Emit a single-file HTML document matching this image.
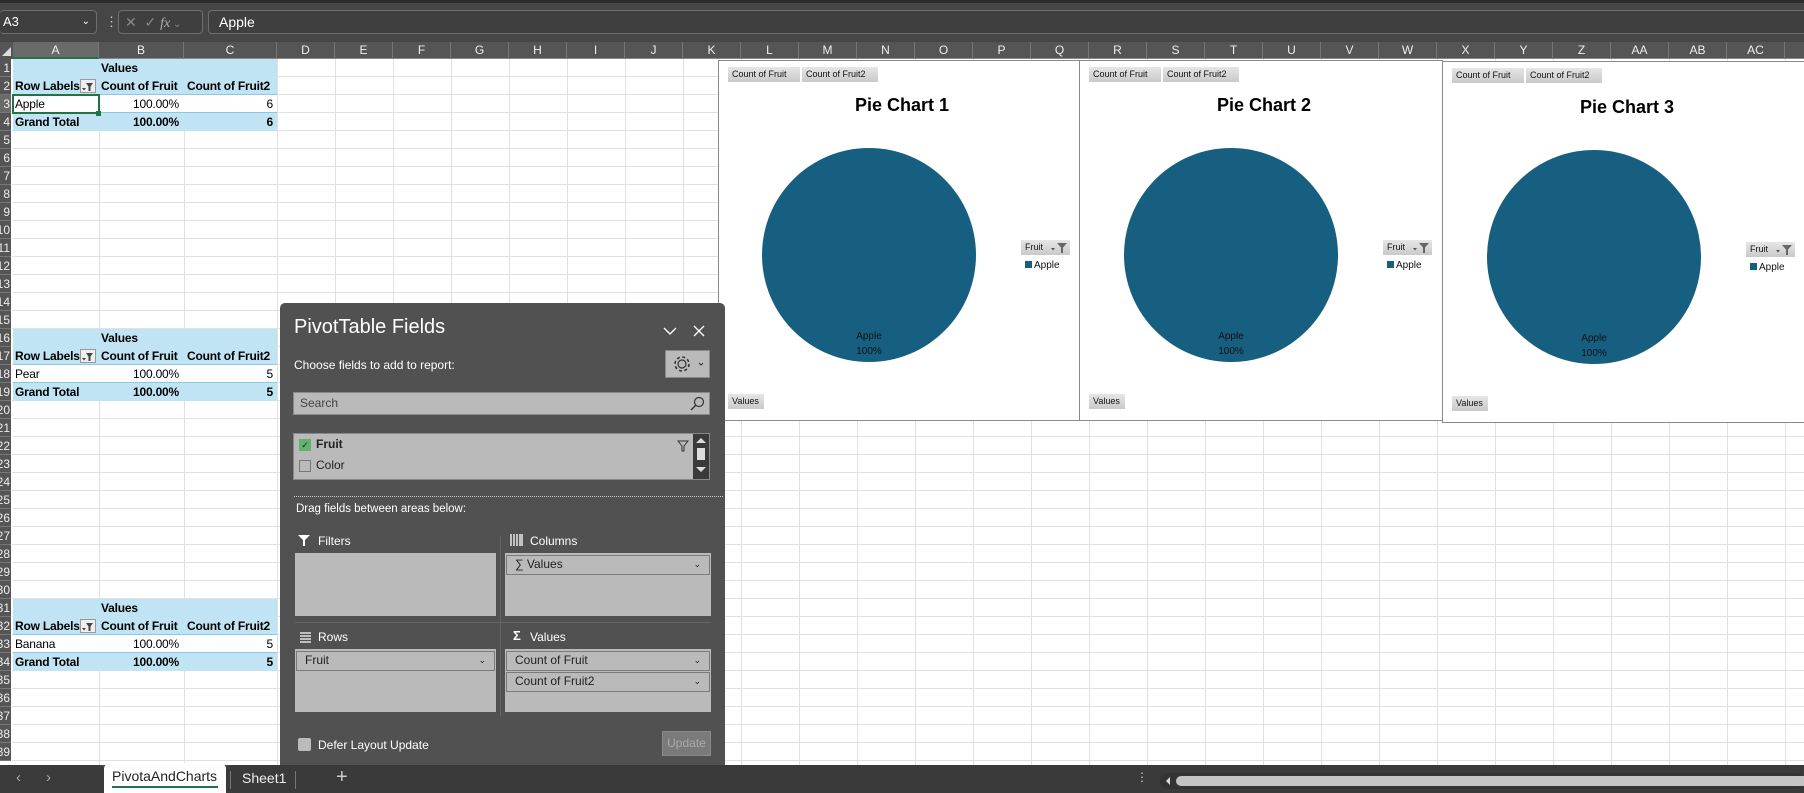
<!DOCTYPE html>
<html><head><meta charset="utf-8"><style>
*{box-sizing:border-box;margin:0;padding:0}
body{width:1804px;height:793px;overflow:hidden;background:#fff;font-family:"Liberation Sans",sans-serif;position:relative}
.a{position:absolute}
.top{left:0;top:0;width:1804px;height:42px;background:#464646;border-top:3px solid #2c2c2c}
.box{border:1px solid #6e6e6e;border-radius:4px;background:#3f3f3f;color:#fff}
.ch{top:42px;height:17px;background:#555;color:#eee;font-size:12px;text-align:center;line-height:17px;border-right:1px solid #777;border-bottom:1px solid #888}
.rh{left:0;width:11px;height:18px;background:#555;color:#eee;font-size:12px;line-height:18px;overflow:hidden;border-bottom:1px solid #777}
.rh span{position:absolute;right:1px;top:0}
.gridL{left:12px;top:59px;width:265px;height:706px;background-image:repeating-linear-gradient(to bottom,transparent 0 17px,#e1e1e1 17px 18px)}
.gridR{left:277px;top:59px;width:1527px;height:706px;
background-image:repeating-linear-gradient(to bottom,transparent 0 17px,#e1e1e1 17px 18px),repeating-linear-gradient(to right,#e1e1e1 0 1px,transparent 1px 58px)}
.vl{top:59px;width:1px;height:706px;background:#e1e1e1}
.pv{font-size:12px;color:#000;line-height:18px}
.pb{background:#c0e4f4}
.c{position:absolute;white-space:nowrap;letter-spacing:-0.2px}
b{font-weight:bold}
.chart{background:#fff;border:1.5px solid #8a8a8a}
.btn{position:absolute;background:linear-gradient(#e6e6e6,#c9c9c9);font-size:9px;color:#111;line-height:15px;padding-left:4px;white-space:nowrap}
.pie{position:absolute;border-radius:50%;background:#175f80}
.pane{left:280px;top:303px;width:445px;height:462px;background:#515151;border-radius:5px 5px 0 0;color:#fff;font-size:12px}
.gb{position:absolute;background:#bababa}
.it{position:absolute;background:#bababa;border:1px solid #7a7a7a;color:#222;font-size:12px;line-height:17px;padding-left:8px}
.it i{position:absolute;right:8px;top:0;font-style:normal;font-size:9px}
.fb{position:absolute;width:16px;height:14px;border:1px solid #999;background:#eee}
</style></head><body>
<div class="a top"></div>
<div class="a box" style="left:0;top:10px;width:97px;height:24px;border-left:none;font-size:13px;line-height:22px;padding-left:3px">A3<span style="position:absolute;right:6px;top:0;font-size:10px">&#8964;</span></div>
<div class="a" style="left:105px;top:14px;color:#ccc;font-size:13px">&#8942;</div>
<div class="a box" style="left:118px;top:10px;width:85px;height:24px;color:#888;font-size:14px;line-height:22px;padding-left:6px">✕ &nbsp;✓ <i style="font-family:'Liberation Serif',serif;color:#aaa">fx</i><span style="font-size:10px"> &#8964;</span></div>
<div class="a box" style="left:208px;top:10px;width:1600px;height:24px;font-size:14px;line-height:22px;padding-left:10px">Apple</div>

<div class="a gridL"></div>
<div class="a gridR"></div>
<div class="a vl" style="left:99px"></div>
<div class="a vl" style="left:184px"></div>

<div class="a" style="left:0;top:42px;width:13px;height:17px;background:#555"></div>
<div class="a" style="left:2px;top:47px;width:0;height:0;border-left:9px solid transparent;border-bottom:9px solid #ddd"></div>
<div class="a ch" style="left:13px;width:86px;background:#6a6a6a;border-bottom:2px solid #217346">A</div>
<div class="a ch" style="left:99px;width:85px">B</div>
<div class="a ch" style="left:184px;width:93px">C</div>
<div class="a ch" style="left:277px;width:58px">D</div><div class="a ch" style="left:335px;width:58px">E</div><div class="a ch" style="left:393px;width:58px">F</div><div class="a ch" style="left:451px;width:58px">G</div><div class="a ch" style="left:509px;width:58px">H</div><div class="a ch" style="left:567px;width:58px">I</div><div class="a ch" style="left:625px;width:58px">J</div><div class="a ch" style="left:683px;width:58px">K</div><div class="a ch" style="left:741px;width:58px">L</div><div class="a ch" style="left:799px;width:58px">M</div><div class="a ch" style="left:857px;width:58px">N</div><div class="a ch" style="left:915px;width:58px">O</div><div class="a ch" style="left:973px;width:58px">P</div><div class="a ch" style="left:1031px;width:58px">Q</div><div class="a ch" style="left:1089px;width:58px">R</div><div class="a ch" style="left:1147px;width:58px">S</div><div class="a ch" style="left:1205px;width:58px">T</div><div class="a ch" style="left:1263px;width:58px">U</div><div class="a ch" style="left:1321px;width:58px">V</div><div class="a ch" style="left:1379px;width:58px">W</div><div class="a ch" style="left:1437px;width:58px">X</div><div class="a ch" style="left:1495px;width:58px">Y</div><div class="a ch" style="left:1553px;width:58px">Z</div><div class="a ch" style="left:1611px;width:58px">AA</div><div class="a ch" style="left:1669px;width:58px">AB</div><div class="a ch" style="left:1727px;width:58px">AC</div><div class="a ch" style="left:1785px;width:58px"></div>

<div class="a rh" style="top:59px"><span>1</span></div><div class="a rh" style="top:77px"><span>2</span></div><div class="a rh" style="top:95px;background:#6a6a6a"><span>3</span></div><div class="a rh" style="top:113px"><span>4</span></div><div class="a rh" style="top:131px"><span>5</span></div><div class="a rh" style="top:149px"><span>6</span></div><div class="a rh" style="top:167px"><span>7</span></div><div class="a rh" style="top:185px"><span>8</span></div><div class="a rh" style="top:203px"><span>9</span></div><div class="a rh" style="top:221px"><span>10</span></div><div class="a rh" style="top:239px"><span>11</span></div><div class="a rh" style="top:257px"><span>12</span></div><div class="a rh" style="top:275px"><span>13</span></div><div class="a rh" style="top:293px"><span>14</span></div><div class="a rh" style="top:311px"><span>15</span></div><div class="a rh" style="top:329px"><span>16</span></div><div class="a rh" style="top:347px"><span>17</span></div><div class="a rh" style="top:365px"><span>18</span></div><div class="a rh" style="top:383px"><span>19</span></div><div class="a rh" style="top:401px"><span>20</span></div><div class="a rh" style="top:419px"><span>21</span></div><div class="a rh" style="top:437px"><span>22</span></div><div class="a rh" style="top:455px"><span>23</span></div><div class="a rh" style="top:473px"><span>24</span></div><div class="a rh" style="top:491px"><span>25</span></div><div class="a rh" style="top:509px"><span>26</span></div><div class="a rh" style="top:527px"><span>27</span></div><div class="a rh" style="top:545px"><span>28</span></div><div class="a rh" style="top:563px"><span>29</span></div><div class="a rh" style="top:581px"><span>30</span></div><div class="a rh" style="top:599px"><span>31</span></div><div class="a rh" style="top:617px"><span>32</span></div><div class="a rh" style="top:635px"><span>33</span></div><div class="a rh" style="top:653px"><span>34</span></div><div class="a rh" style="top:671px"><span>35</span></div><div class="a rh" style="top:689px"><span>36</span></div><div class="a rh" style="top:707px"><span>37</span></div><div class="a rh" style="top:725px"><span>38</span></div><div class="a rh" style="top:743px"><span>39</span></div>

<!-- pivot table 1 -->
<div class="a pv" style="left:13px;top:59px;width:264px;height:72px">
 <div class="c pb" style="left:0;top:0;width:264px;height:36px;border-bottom:1px solid #8cc7e6"></div>
 <div class="c" style="left:0;top:36px;width:264px;height:18px;background:#fff;border-bottom:1px solid #8cc7e6"></div>
 <div class="c pb" style="left:0;top:54px;width:264px;height:18px"></div>
 <div class="c" style="left:88px;top:0"><b>Values</b></div>
 <div class="c" style="left:2px;top:18px"><b>Row Labels</b></div>
 <div class="fb" style="left:67px;top:20px"><svg width="14" height="12"><path d="M5 2h7L9.5 5.5V10h-2V5.5z" fill="#444"/><path d="M1 7h4l-2 2.5z" fill="#444"/></svg></div>
 <div class="c" style="left:88px;top:18px"><b>Count of Fruit</b></div>
 <div class="c" style="left:174px;top:18px"><b>Count of Fruit2</b></div>
 <div class="c" style="left:2px;top:36px">Apple</div>
 <div class="c" style="left:86px;top:36px;width:80px;text-align:right">100.00%</div>
 <div class="c" style="left:174px;top:36px;width:86px;text-align:right">6</div>
 <div class="c" style="left:2px;top:54px"><b>Grand Total</b></div>
 <div class="c" style="left:86px;top:54px;width:80px;text-align:right"><b>100.00%</b></div>
 <div class="c" style="left:174px;top:54px;width:86px;text-align:right"><b>6</b></div>
 <div class="c" style="left:-1px;top:35px;width:88px;height:20px;border:2px solid #217346"></div>
 <div class="c" style="left:83px;top:52px;width:5px;height:5px;background:#217346"></div>
</div>
<!-- pivot table 2 -->
<div class="a pv" style="left:13px;top:329px;width:264px;height:72px">
 <div class="c pb" style="left:0;top:0;width:264px;height:36px;border-bottom:1px solid #8cc7e6"></div>
 <div class="c" style="left:0;top:36px;width:264px;height:18px;background:#fff;border-bottom:1px solid #8cc7e6"></div>
 <div class="c pb" style="left:0;top:54px;width:264px;height:18px"></div>
 <div class="c" style="left:88px;top:0"><b>Values</b></div>
 <div class="c" style="left:2px;top:18px"><b>Row Labels</b></div>
 <div class="fb" style="left:67px;top:20px"><svg width="14" height="12"><path d="M5 2h7L9.5 5.5V10h-2V5.5z" fill="#444"/><path d="M1 7h4l-2 2.5z" fill="#444"/></svg></div>
 <div class="c" style="left:88px;top:18px"><b>Count of Fruit</b></div>
 <div class="c" style="left:174px;top:18px"><b>Count of Fruit2</b></div>
 <div class="c" style="left:2px;top:36px">Pear</div>
 <div class="c" style="left:86px;top:36px;width:80px;text-align:right">100.00%</div>
 <div class="c" style="left:174px;top:36px;width:86px;text-align:right">5</div>
 <div class="c" style="left:2px;top:54px"><b>Grand Total</b></div>
 <div class="c" style="left:86px;top:54px;width:80px;text-align:right"><b>100.00%</b></div>
 <div class="c" style="left:174px;top:54px;width:86px;text-align:right"><b>5</b></div>
</div>
<!-- pivot table 3 -->
<div class="a pv" style="left:13px;top:599px;width:264px;height:72px">
 <div class="c pb" style="left:0;top:0;width:264px;height:36px;border-bottom:1px solid #8cc7e6"></div>
 <div class="c" style="left:0;top:36px;width:264px;height:18px;background:#fff;border-bottom:1px solid #8cc7e6"></div>
 <div class="c pb" style="left:0;top:54px;width:264px;height:18px"></div>
 <div class="c" style="left:88px;top:0"><b>Values</b></div>
 <div class="c" style="left:2px;top:18px"><b>Row Labels</b></div>
 <div class="fb" style="left:67px;top:20px"><svg width="14" height="12"><path d="M5 2h7L9.5 5.5V10h-2V5.5z" fill="#444"/><path d="M1 7h4l-2 2.5z" fill="#444"/></svg></div>
 <div class="c" style="left:88px;top:18px"><b>Count of Fruit</b></div>
 <div class="c" style="left:174px;top:18px"><b>Count of Fruit2</b></div>
 <div class="c" style="left:2px;top:36px">Banana</div>
 <div class="c" style="left:86px;top:36px;width:80px;text-align:right">100.00%</div>
 <div class="c" style="left:174px;top:36px;width:86px;text-align:right">5</div>
 <div class="c" style="left:2px;top:54px"><b>Grand Total</b></div>
 <div class="c" style="left:86px;top:54px;width:80px;text-align:right"><b>100.00%</b></div>
 <div class="c" style="left:174px;top:54px;width:86px;text-align:right"><b>5</b></div>
</div>

<!-- charts -->
<div class="a chart" style="left:718px;top:60px;width:362px;height:361px">
 <div class="btn" style="left:9px;top:6px;width:72px">Count of Fruit</div>
 <div class="btn" style="left:83px;top:6px;width:76px">Count of Fruit2</div>
 <div class="a" style="left:0;top:34px;width:362px;text-align:center;font-size:18px;font-weight:bold;color:#000;padding-left:4px">Pie Chart 1</div>
 <div class="pie" style="left:43px;top:87px;width:214px;height:214px"></div>
 <div class="a" style="left:100px;top:268px;width:100px;text-align:center;font-size:10px;line-height:15px;color:#111">Apple<br>100%</div>
 <div class="btn" style="left:302px;top:179px;width:49px">Fruit<svg style="position:absolute;right:2px;top:2px" width="18" height="11"><path d="M1 6h4l-2 2.5z" fill="#555"/><path d="M7 1h10l-4 4.5V11h-2V5.5z" fill="#666"/></svg></div>
 <div class="a" style="left:306px;top:199px;font-size:10px;color:#111"><span style="display:inline-block;width:7px;height:7px;background:#175f80;margin-right:2px"></span>Apple</div>
 <div class="btn" style="left:9px;top:333px;width:36px">Values</div>
</div>
<div class="a chart" style="left:1079px;top:60px;width:364px;height:361px">
 <div class="btn" style="left:9px;top:6px;width:72px">Count of Fruit</div>
 <div class="btn" style="left:83px;top:6px;width:76px">Count of Fruit2</div>
 <div class="a" style="left:0;top:34px;width:364px;text-align:center;font-size:18px;font-weight:bold;color:#000;padding-left:4px">Pie Chart 2</div>
 <div class="pie" style="left:44px;top:87px;width:214px;height:214px"></div>
 <div class="a" style="left:101px;top:268px;width:100px;text-align:center;font-size:10px;line-height:15px;color:#111">Apple<br>100%</div>
 <div class="btn" style="left:303px;top:179px;width:49px">Fruit<svg style="position:absolute;right:2px;top:2px" width="18" height="11"><path d="M1 6h4l-2 2.5z" fill="#555"/><path d="M7 1h10l-4 4.5V11h-2V5.5z" fill="#666"/></svg></div>
 <div class="a" style="left:307px;top:199px;font-size:10px;color:#111"><span style="display:inline-block;width:7px;height:7px;background:#175f80;margin-right:2px"></span>Apple</div>
 <div class="btn" style="left:9px;top:333px;width:36px">Values</div>
</div>
<div class="a chart" style="left:1442px;top:61px;width:364px;height:362px">
 <div class="btn" style="left:9px;top:6px;width:72px">Count of Fruit</div>
 <div class="btn" style="left:83px;top:6px;width:76px">Count of Fruit2</div>
 <div class="a" style="left:0;top:35px;width:364px;text-align:center;font-size:18px;font-weight:bold;color:#000;padding-left:4px">Pie Chart 3</div>
 <div class="pie" style="left:44px;top:88px;width:214px;height:214px"></div>
 <div class="a" style="left:101px;top:269px;width:100px;text-align:center;font-size:10px;line-height:15px;color:#111">Apple<br>100%</div>
 <div class="btn" style="left:303px;top:180px;width:49px">Fruit<svg style="position:absolute;right:2px;top:2px" width="18" height="11"><path d="M1 6h4l-2 2.5z" fill="#555"/><path d="M7 1h10l-4 4.5V11h-2V5.5z" fill="#666"/></svg></div>
 <div class="a" style="left:307px;top:200px;font-size:10px;color:#111"><span style="display:inline-block;width:7px;height:7px;background:#175f80;margin-right:2px"></span>Apple</div>
 <div class="btn" style="left:9px;top:334px;width:36px">Values</div>
</div>

<!-- pivot pane -->
<div class="a pane">
 <div class="a" style="left:14px;top:13px;font-size:20px;color:#fff">PivotTable Fields</div>
 <svg class="a" style="left:382px;top:21px" width="50" height="16"><path d="M2 4l6 6 6-6M32 2l10 10M42 2L32 12" stroke="#fff" stroke-width="1.4" fill="none"/></svg>
 <div class="a" style="left:14px;top:55px">Choose fields to add to report:</div>
 <div class="gb" style="left:385px;top:47px;width:45px;height:28px;border:1px solid #888"><svg width="45" height="28"><circle cx="16" cy="13" r="4" fill="none" stroke="#333" stroke-width="1.2"/><circle cx="16" cy="13" r="7" fill="none" stroke="#333" stroke-width="1.6" stroke-dasharray="3 2.5"/><path d="M33 12l2 2 2-2" stroke="#333" fill="none"/></svg></div>
 <div class="gb" style="left:13px;top:89px;width:417px;height:23px;border:1px solid #888;color:#444;line-height:21px;padding-left:6px">Search<svg style="position:absolute;right:4px;top:3px" width="16" height="16"><circle cx="10" cy="6" r="4.5" fill="none" stroke="#333" stroke-width="1.2"/><path d="M7 9l-5 5" stroke="#333" stroke-width="1.4"/></svg></div>
 <div class="gb" style="left:13px;top:130px;width:417px;height:47px;border:1px solid #888;color:#222">
  <div class="a" style="left:5px;top:5px;width:12px;height:12px;background:#5fb36f;font-size:9px;line-height:12px;text-align:center;color:#222">✓</div>
  <div class="a" style="left:22px;top:3px;font-weight:bold">Fruit</div>
  <div class="a" style="left:5px;top:26px;width:12px;height:12px;border:1px solid #777"></div>
  <div class="a" style="left:22px;top:24px">Color</div>
  <svg class="a" style="left:383px;top:6px" width="12" height="12"><path d="M1 1h10L7 6v5H5V6z" fill="none" stroke="#333"/></svg>
  <div class="a" style="left:399px;top:0;width:16px;height:45px;background:#3a3a3a"><div style="position:absolute;left:3px;top:4px;border:5px solid transparent;border-bottom-color:#ddd;border-top:none"></div><div style="position:absolute;left:4px;top:14px;width:8px;height:12px;background:#ddd"></div><div style="position:absolute;left:3px;top:33px;border:5px solid transparent;border-top-color:#ddd;border-bottom:none"></div></div>
 </div>
 <div class="a" style="left:14px;top:193px;width:429px;border-top:1px dotted #ccc"></div>
 <div class="a" style="left:16px;top:200px;font-size:11.5px">Drag fields between areas below:</div>
 <svg class="a" style="left:18px;top:231px" width="12" height="12"><path d="M0 1h12L7 6v6H5V6z" fill="#fff"/></svg>
 <div class="a" style="left:38px;top:231px">Filters</div>
 <svg class="a" style="left:230px;top:231px" width="14" height="12"><path d="M1 0v12M4 0v12M7 0v12M10 0v12M12 0v12" stroke="#fff" stroke-width="1.3"/></svg>
 <div class="a" style="left:250px;top:231px">Columns</div>
 <div class="gb" style="left:15px;top:250px;width:201px;height:63px"></div>
 <div class="gb" style="left:225px;top:250px;width:206px;height:63px"></div>
 <div class="it" style="left:226px;top:252px;width:204px;height:20px">∑ Values<i>&#8964;</i></div>
 <div class="a" style="left:15px;top:319px;width:416px;border-top:1px solid #666"></div>
 <div class="a" style="left:220px;top:233px;height:180px;border-left:1px solid #666"></div>
 <svg class="a" style="left:20px;top:328px" width="12" height="12"><path d="M0 2h11M0 5h11M0 8h11M0 11h11" stroke="#fff" stroke-width="1.3"/></svg>
 <div class="a" style="left:38px;top:327px">Rows</div>
 <div class="a" style="left:233px;top:325px;font-size:13px;font-weight:bold">Σ</div>
 <div class="a" style="left:250px;top:327px">Values</div>
 <div class="gb" style="left:15px;top:346px;width:201px;height:63px"></div>
 <div class="gb" style="left:225px;top:346px;width:206px;height:63px"></div>
 <div class="it" style="left:16px;top:348px;width:199px;height:20px">Fruit<i>&#8964;</i></div>
 <div class="it" style="left:226px;top:348px;width:204px;height:20px">Count of Fruit<i>&#8964;</i></div>
 <div class="it" style="left:226px;top:369px;width:204px;height:20px">Count of Fruit2<i>&#8964;</i></div>
 <div class="a" style="left:18px;top:435px;width:13px;height:13px;background:#bbb;border-radius:2px"></div>
 <div class="a" style="left:38px;top:435px">Defer Layout Update</div>
 <div class="a" style="left:382px;top:428px;width:49px;height:25px;background:#7a7a7a;border:1px solid #8a8a8a;color:#aaa;text-align:center;line-height:23px">Update</div>
</div>

<!-- bottom tab bar -->
<div class="a" style="left:0;top:765px;width:1804px;height:28px;background:#474747"></div>
<div class="a" style="left:0;top:765px;width:104px;height:28px;background:#3b3b3b;border-radius:0 6px 0 0"></div>
<div class="a" style="left:16px;top:769px;color:#aaa;font-size:15px">‹ &nbsp;&nbsp;&nbsp;&nbsp; ›</div>
<div class="a" style="left:104px;top:763px;width:122px;height:30px;background:#fff;border-radius:6px 6px 0 0"></div>
<div class="a" style="left:112px;top:768px;font-size:14px;color:#222">PivotaAndCharts</div>
<div class="a" style="left:112px;top:786px;width:106px;height:2px;background:#217346"></div>
<div class="a" style="left:226px;top:765px;width:1578px;height:28px;background:#3a3a3a;border-radius:6px 0 0 0"></div>
<div class="a" style="left:242px;top:770px;font-size:14px;color:#eee">Sheet1</div>
<div class="a" style="left:230px;top:771px;height:18px;border-left:1px solid #777"></div>
<div class="a" style="left:295px;top:771px;height:18px;border-left:1px solid #777"></div>
<div class="a" style="left:336px;top:766px;font-size:20px;color:#ccc">+</div>
<div class="a" style="left:1136px;top:770px;color:#ccc;font-size:12px">&#8942;</div>
<div class="a" style="left:1160px;top:773px;width:644px;height:16px;background:#333;border-radius:8px"></div>
<div class="a" style="left:1166px;top:777px;border:4px solid transparent;border-right-color:#ddd;border-left:none"></div>
<div class="a" style="left:1176px;top:776px;width:628px;height:10px;background:#c4c4c4;border-radius:5px 0 0 5px"></div>
</body></html>
